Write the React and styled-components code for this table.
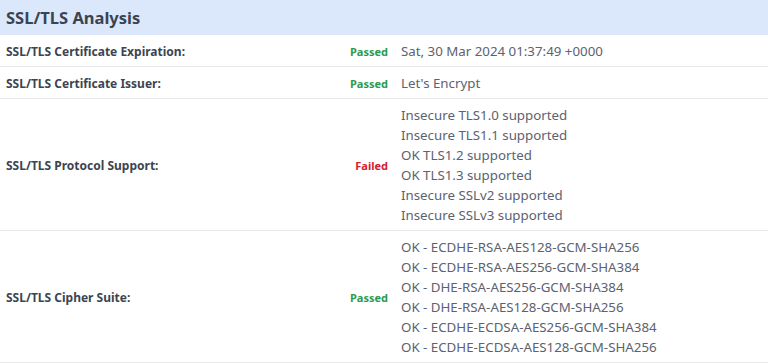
import styled, { createGlobalStyle } from "styled-components"

const Global = createGlobalStyle`
body{
margin:0;
background:#ffffff;
font-family:"Noto Sans", "Open Sans", sans-serif;
}
`

const Panel = styled.div`
width:768px;
`

const Header = styled.div`
background-color:#dbe8fb;
height:35px;
display:flex;
align-items:center;
padding-left:6px;
font-size:16.5px;
font-weight:700;
color:#3b4350;
`

const Row = styled.div`
display:grid;
grid-template-columns:340px 54px 1fr;
align-items:center;
padding:6px 0 5px;
border-bottom:1px solid #e8e8ea;
`

const Label = styled.div`
padding-left:6px;
font-size:12px;
font-weight:700;
color:#3d4450;
`

const Status = styled.div`
text-align:right;
padding-right:6px;
font-size:11px;
font-weight:700;
color:${(props) => (props.failed ? "#d4202f" : "#2b9a4f")};
`

const Values = styled.div`
padding-left:7px;
font-size:13.3px;
line-height:20px;
color:#5c6270;
`

const rows = [
  {
    label: "SSL/TLS Certificate Expiration:",
    status: "Passed",
    values: ["Sat, 30 Mar 2024 01:37:49 +0000"],
  },
  {
    label: "SSL/TLS Certificate Issuer:",
    status: "Passed",
    values: ["Let's Encrypt"],
  },
  {
    label: "SSL/TLS Protocol Support:",
    status: "Failed",
    values: [
      "Insecure TLS1.0 supported",
      "Insecure TLS1.1 supported",
      "OK TLS1.2 supported",
      "OK TLS1.3 supported",
      "Insecure SSLv2 supported",
      "Insecure SSLv3 supported",
    ],
  },
  {
    label: "SSL/TLS Cipher Suite:",
    status: "Passed",
    values: [
      "OK - ECDHE-RSA-AES128-GCM-SHA256",
      "OK - ECDHE-RSA-AES256-GCM-SHA384",
      "OK - DHE-RSA-AES256-GCM-SHA384",
      "OK - DHE-RSA-AES128-GCM-SHA256",
      "OK - ECDHE-ECDSA-AES256-GCM-SHA384",
      "OK - ECDHE-ECDSA-AES128-GCM-SHA256",
    ],
  },
]

export default function App() {
  return (
    <>
      <Global />
      <Panel>
        <Header>SSL/TLS Analysis</Header>
        {rows.map((r) => (
          <Row key={r.label}>
            <Label>{r.label}</Label>
            <Status failed={r.status === "Failed"}>{r.status}</Status>
            <Values>
              {r.values.map((v) => (
                <div key={v}>{v}</div>
              ))}
            </Values>
          </Row>
        ))}
      </Panel>
    </>
  )
}
